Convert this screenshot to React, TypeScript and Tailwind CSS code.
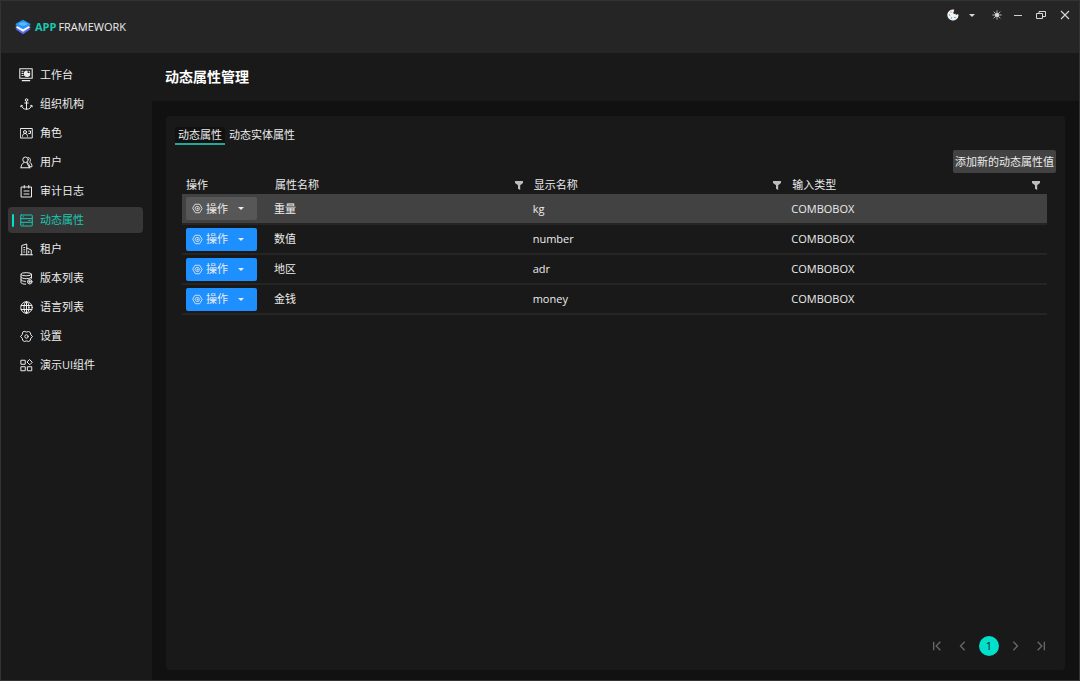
import React, { useState } from 'react';

interface IconProps {
  className?: string;
  children?: React.ReactNode;
}

const Icon: React.FC<IconProps> = ({ className = 'size-[13px]', children }) => (
  <svg
    viewBox="0 0 26 26"
    className={`shrink-0 ${className}`}
    fill="none"
    stroke="currentColor"
    strokeWidth="2"
    strokeLinecap="round"
    strokeLinejoin="round"
    aria-hidden="true"
  >
    {children}
  </svg>
);

const GearIcon: React.FC<{ className?: string }> = ({ className }) => (
  <Icon className={className}>
    <path d="M9 3 Q13 5.5 17 3 L20.5 5 Q20.5 10 25 13 Q20.5 16 20.5 21 L17 23 Q13 20.5 9 23 L5.5 21 Q5.5 16 1 13 Q5.5 10 5.5 5 Z" />
    <circle cx="13" cy="13" r="3.4" />
  </Icon>
);

const HexIcon = () => (
  <Icon className="size-[11px]">
    <path d="M8 3h10l6 10-6 10H8L2 13z" />
    <path d="M10.5 8.5h5l3 4.5-3 4.5h-5l-3-4.5z" />
    <circle cx="13" cy="13" r="1" />
  </Icon>
);

const Caret = () => (
  <svg viewBox="0 0 6 3" className="h-[3px] w-[6px] shrink-0" fill="currentColor" aria-hidden="true">
    <path d="M0 0h6L3 3z" />
  </svg>
);

const MENU = [
  {
    label: '工作台',
    icon: (
      <Icon className="size-[14px]">
        <rect x="1.5" y="1.5" width="23" height="17.5" />
        <path d="M6 23.5h14M5.5 6h2M5.5 10h2M5.5 14h2" />
        <path d="M15 5.5a5 5 0 1 0 5 5h-5z" fill="currentColor" />
        <path d="M18.5 6l1.5 1.5" />
      </Icon>
    ),
  },
  {
    label: '组织机构',
    icon: (
      <Icon>
        <circle cx="13" cy="4" r="2.5" />
        <path d="M13 6.5v16M9.5 10h7M2.5 15c1 4.5 5 7.5 10.5 7.5s9.500-3 10.500-7.500M1.500 17.500l1-3 3 1.500M24.500 17.500l-1-3-3 1.500" />
      </Icon>
    ),
  },
  {
    label: '角色',
    icon: (
      <Icon>
        <rect x="1.5" y="3" width="23" height="19" />
        <circle cx="10" cy="10" r="3" />
        <path d="M5 18.5c0-3.500 2-5.500 5-5.500s5 2 5 5.500M17.500 8h3.500v5h-3.500" />
      </Icon>
    ),
  },
  {
    label: '用户',
    icon: (
      <Icon>
        <circle cx="11" cy="7.5" r="5.5" />
        <path d="M2 23.5c0-5 2.5-9 6-10.5M14 13c3.5 1.5 5.5 5 5.5 10.5zM2 23.5h17.5" />
        <path d="M17 3c4 1 5.5 6 2 9.5 3.5 1.5 5 4.5 5 9h-4" />
      </Icon>
    ),
  },
  {
    label: '审计日志',
    icon: (
      <Icon>
        <rect x="3" y="4" width="20" height="20" />
        <path d="M8.5 1v5M17.5 1v5M8 12h10M8 18h10" />
      </Icon>
    ),
  },
  {
    label: '动态属性',
    icon: (
      <Icon>
        <rect x="1.5" y="2" width="23" height="22" rx="1" />
        <path d="M1.5 9.3h23M1.5 16.6h23M6 5.7h1M18 13h2M6 20.3h1" />
      </Icon>
    ),
  },
  {
    label: '租户',
    icon: (
      <Icon>
        <path d="M3.5 23.5V5l10-3v21.5M13.5 10l9 4v9.5M1 23.5h24M7.5 9h2M7.5 13.5h2M7.5 18h2M17.5 16.5v3" />
      </Icon>
    ),
  },
  {
    label: '版本列表',
    icon: (
      <Icon>
        <ellipse cx="12.5" cy="4.5" rx="10.5" ry="3.2" />
        <path d="M2 4.5v16.5c0 2 4 3.3 9.5 3.3M23 4.5v8M2 10c0 2 5 3.3 10.5 3.3S23 12 23 10M2 15.5c0 1.9 4 3.1 9 3.3" />
        <circle cx="19.5" cy="19.5" r="4.5" />
        <path d="M17 19.5h5M19.5 17v5" />
      </Icon>
    ),
  },
  {
    label: '语言列表',
    icon: (
      <Icon>
        <circle cx="13" cy="13" r="11.5" />
        <ellipse cx="13" cy="13" rx="5" ry="11.5" />
        <path d="M13 1.5v23M2.5 9h21M2.5 17h21" />
      </Icon>
    ),
  },
  { label: '设置', icon: <GearIcon /> },
  {
    label: '演示UI组件',
    icon: (
      <Icon>
        <rect x="2.5" y="2.5" width="8" height="8" />
        <rect x="2.5" y="15.5" width="8" height="8" />
        <rect x="15.5" y="15.5" width="8" height="8" />
        <path d="M19.5 1.5l5 5-5 5-5-5z" />
      </Icon>
    ),
  },
];

const COLUMNS = ['属性名称', '显示名称', '输入类型'];

const ROWS = [
  { name: '重量', display: 'kg', type: 'COMBOBOX' },
  { name: '数值', display: 'number', type: 'COMBOBOX' },
  { name: '地区', display: 'adr', type: 'COMBOBOX' },
  { name: '金钱', display: 'money', type: 'COMBOBOX' },
];

const TABS = ['动态属性', '动态实体属性'];

const PAGER_ICONS = {
  first: 'M2 1v10M10 1L5 6l5 5',
  prev: 'M8 1L3 6l5 5',
  next: 'M4 1l5 5-5 5',
  last: 'M2 1l5 5-5 5M10 1v10',
};

const PagerButton: React.FC<{ kind: keyof typeof PAGER_ICONS; label: string }> = ({ kind, label }) => (
  <button aria-label={label} className="flex size-5 items-center justify-center text-[#686868]">
    <svg viewBox="0 0 12 12" className="size-[10px]" fill="none" stroke="currentColor" strokeWidth="1.6" aria-hidden="true">
      <path d={PAGER_ICONS[kind]} />
    </svg>
  </button>
);

const Header = () => (
  <header className="flex h-[52px] items-start justify-between bg-[#252525] pr-[5px] pl-[14px]">
    <div className="flex items-center gap-1 pt-[18px]">
      <svg viewBox="0 0 48 48" className="size-4" aria-hidden="true">
        <path d="M24 18L47 30 24 46 1 30z" fill="#5b6df5" />
        <path d="M24 14L47 24 24 38 1 24z" fill="#f4f8ff" />
        <path d="M24 2L46 14v5L24 31 2 19v-5z" fill="#2196f3" />
        <path d="M15 12v6M21 10v10M27 10v10M33 12v6" stroke="#bfe2ff" strokeWidth="2.5" />
      </svg>
      <span className="flex gap-[2px] text-[11px] leading-4">
        <b className="text-[#19c9b3]">APP</b>
        <span>FRAMEWORK</span>
      </span>
    </div>
    <div className="flex items-center pt-[2px] text-[#d8d8d8]">
      <button aria-label="主题颜色" className="flex h-5 items-center gap-[10px] pr-[10px]">
        <svg viewBox="0 0 24 24" className="size-3" aria-hidden="true">
          <path d="M14 1a11.200 11.200 0 1 0 9 12c0-2-1.500-3-3-2-2 1.500-3 0-3-1.500-3 1-5-1-4-3.500 1-1.500 2-3 1-5z" fill="#f2f2f2" />
          <circle cx="8" cy="6" r="1.5" fill="#f28b82" />
          <circle cx="5" cy="12" r="1.5" fill="#35c7a4" />
          <circle cx="9" cy="18" r="1.5" fill="#5b8def" />
          <circle cx="16" cy="17" r="1.5" fill="#37b26c" />
        </svg>
        <Caret />
      </button>
      <button aria-label="切换明暗" className="flex size-6 items-center justify-center">
        <svg viewBox="0 0 24 24" className="size-[10px]" fill="none" stroke="currentColor" strokeWidth="2" aria-hidden="true">
          <circle cx="12" cy="12" r="5" fill="currentColor" />
          <path d="M12 1v4M12 19v4M1 12h4M19 12h4M4 4l3 3M17 17l3 3M20 4l-3 3M7 17l-3 3" />
        </svg>
      </button>
      <button aria-label="最小化" className="flex h-6 w-[18px] items-center justify-center">
        <span className="h-px w-2 bg-[#cfcfcf]" />
      </button>
      <button aria-label="还原" className="flex h-6 w-7 items-center justify-center">
        <svg viewBox="0 0 10 10" className="size-[10px]" fill="none" stroke="currentColor" aria-hidden="true">
          <path d="M.5 3.5h6v5h-6zM3 3.500v-2h6.500v5h-3" />
        </svg>
      </button>
      <button aria-label="关闭" className="flex h-6 w-[19px] items-center justify-center">
        <svg viewBox="0 0 10 10" className="size-[10px]" fill="none" stroke="currentColor" strokeWidth="1.1" aria-hidden="true">
          <path d="M1 1l8 8M9 1L1 9" />
        </svg>
      </button>
    </div>
  </header>
);

const Sidebar = () => {
  const [active, setActive] = useState('动态属性');

  return (
    <nav className="flex w-[151px] shrink-0 flex-col gap-[3px] pt-[9px] pr-[9px] pl-[7px]">
      {MENU.map(item => (
        <button
          key={item.label}
          onClick={() => setActive(item.label)}
          className={`flex h-[26px] items-center rounded pl-1 text-left ${
            item.label === active ? 'bg-[#373737] text-[#19c9b3]' : ''
          }`}
        >
          <span className={`h-[13px] w-[2px] rounded-full ${item.label === active ? 'bg-[#00e0cb]' : ''}`} />
          <span className="ml-[5px] flex w-[14px] justify-center">{item.icon}</span>
          <span className="ml-[7px]">{item.label}</span>
        </button>
      ))}
    </nav>
  );
};

const AttributeTable = () => {
  const [selected, setSelected] = useState(0);

  return (
    <table className="w-full table-fixed border-collapse text-left">
      <thead>
        <tr className="h-[18px]">
          <th className="w-[89px] pl-1 font-normal">操作</th>
          {COLUMNS.map(column => (
            <th key={column} className="pr-[7px] pl-1 font-normal">
              <div className="flex items-center justify-between">
                {column}
                <button aria-label={`筛选${column}`}>
                  <svg viewBox="0 0 8 9" className="h-[9px] w-2" fill="#bdbdbd" aria-hidden="true">
                    <path d="M0 0h8v2L5.2 4.2V9L3 7.8V4.2L0 2z" />
                  </svg>
                </button>
              </div>
            </th>
          ))}
        </tr>
      </thead>
      <tbody>
        {ROWS.map((row, i) => (
          <tr
            key={row.name}
            onClick={() => setSelected(i)}
            className={`h-[30px] border-b-2 border-[#252525] ${i === selected ? 'bg-[#424242]' : ''}`}
          >
            <td className="pl-1">
              <button
                className={`flex h-[23px] w-[71px] items-center rounded-[2px] pl-[6px] ${
                  i === selected ? 'bg-[#575757]' : 'bg-[#1e8fff]'
                }`}
              >
                <HexIcon />
                <span className="mr-[10px] ml-[3px]">操作</span>
                <Caret />
              </button>
            </td>
            <td className="pl-[3px]">{row.name}</td>
            <td className="pl-[3px]">{row.display}</td>
            <td className="pl-[3px]">{row.type}</td>
          </tr>
        ))}
      </tbody>
    </table>
  );
};

const App = () => {
  const [tab, setTab] = useState(TABS[0]);

  return (
    <div className="flex min-h-screen flex-col border border-[#333] bg-[#191919] font-['Open_Sans','Noto_Sans_CJK_SC',sans-serif] text-[11px] leading-4 text-[#ececec]">
      <Header />
      <div className="flex flex-1">
        <Sidebar />
        <main className="flex min-w-0 flex-1 flex-col">
          <h1 className="flex h-12 items-center pl-[13px] text-[14px] font-bold text-white">动态属性管理</h1>
          <div className="flex flex-1 flex-col bg-[#111] px-[14px] pt-[15px] pb-[10px]">
            <section className="flex flex-1 flex-col rounded bg-[#191919] pt-[11px] pr-[9px] pb-[14px] pl-[9px]">
              <div className="flex gap-px" role="tablist">
                {TABS.map(name => (
                  <button
                    key={name}
                    role="tab"
                    aria-selected={name === tab}
                    onClick={() => setTab(name)}
                    className={`h-[18px] border-b-2 px-[3px] ${
                      name === tab ? 'border-[#22a899] bg-[#111]' : 'border-transparent'
                    }`}
                  >
                    {name}
                  </button>
                ))}
              </div>
              <button className="mt-[5px] h-[23px] self-end rounded-[2px] bg-[#424242] px-[2px]">
                添加新的动态属性值
              </button>
              <div className="mt-[3px] pr-[9px] pl-[7px]">
                <AttributeTable />
              </div>
              <div className="mt-auto flex items-center justify-end gap-[6px] pr-[5px]">
                <PagerButton kind="first" label="首页" />
                <PagerButton kind="prev" label="上一页" />
                <button className="size-5 rounded-full bg-[#00e0cb] text-[#191919]">1</button>
                <PagerButton kind="next" label="下一页" />
                <PagerButton kind="last" label="末页" />
              </div>
            </section>
          </div>
        </main>
      </div>
    </div>
  );
};

export default App;
